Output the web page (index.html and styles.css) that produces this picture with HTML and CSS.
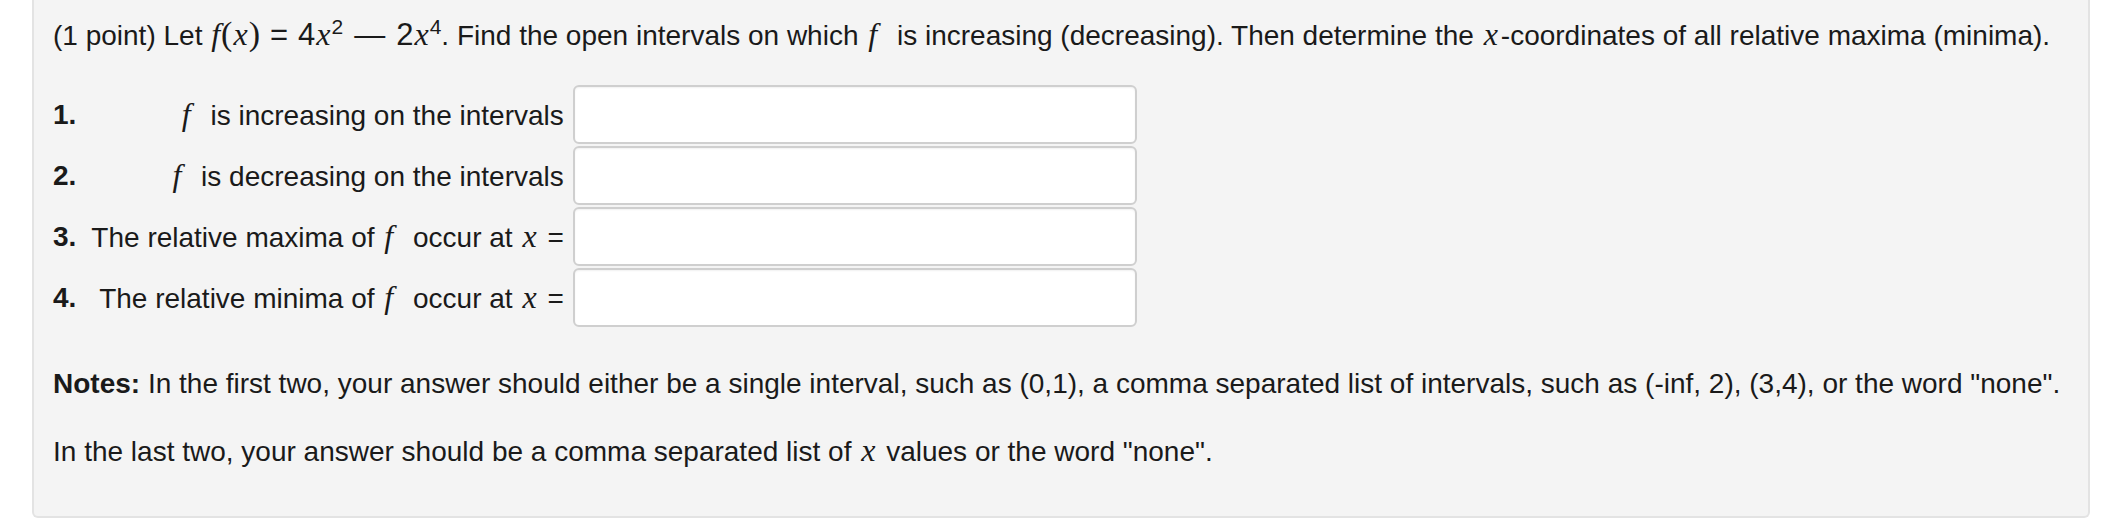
FILE: index.html
```html
<!DOCTYPE html>
<html lang="en">
<head>
  <meta charset="UTF-8" />
  <title>Problem</title>
  <link rel="stylesheet" href="styles.css">
</head>
<body>
  <div class="problem">
    <p class="intro">(1 point) Let <span class="m"><i>f</i><span class="paren">(</span><i>x</i><span class="paren">)</span><span class="op">=</span>4<i>x</i><sup>2</sup><span class="op minus">&#8212;</span>2<i>x</i><sup>4</sup></span>. Find the open intervals on which <i class="f">f</i> is increasing (decreasing). Then determine the <i>x</i>-coordinates of all relative maxima (minima).</p>

    <div class="answers">
      <b class="num">1.</b>
      <label class="lbl" for="ans1"><i class="f">f</i> is increasing on the intervals</label>
      <input type="text" id="ans1" />

      <b class="num">2.</b>
      <label class="lbl" for="ans2"><i class="f">f</i> is decreasing on the intervals</label>
      <input type="text" id="ans2" />

      <b class="num">3.</b>
      <label class="lbl" for="ans3">The relative maxima of <i class="f">f</i> occur at <i>x</i> =</label>
      <input type="text" id="ans3" />

      <b class="num">4.</b>
      <label class="lbl" for="ans4">The relative minima of <i class="f">f</i> occur at <i>x</i> =</label>
      <input type="text" id="ans4" />
    </div>

    <p class="note"><b>Notes:</b> In the first two, your answer should either be a single interval, such as (0,1), a comma separated list of intervals, such as (-inf, 2), (3,4), or the word "none".</p>
    <p class="note">In the last two, your answer should be a comma separated list of <i>x</i> values or the word "none".</p>
  </div>
</body>
</html>
```
FILE: styles.css
```css
body {
  margin: 0;
  padding: 0;
  font-family: "Liberation Sans", Arial, sans-serif;
  font-size: 28px;
  color: #1a1a1a;
  background: #fff;
}
.problem {
  margin-left: 32px;
  width: 2058px;
  height: 518px;
  box-sizing: border-box;
  background: #f4f4f4;
  border: 2px solid #e3e3e3;
  border-top: none;
  border-radius: 0 0 6px 6px;
  padding: 0 19px;
}
.intro {
  margin: 0;
  padding-top: 17px;
  line-height: 34px;
}
i {
  font-family: "Liberation Serif", "DejaVu Serif", serif;
  font-size: 32px;
  padding: 0 3px 0 2px;
}
i.f {
  padding-right: 12px;
}
.paren {
  font-family: "Liberation Serif", serif;
  font-size: 34px;
}
sup {
  font-size: 21px;
  line-height: 0;
}
.m {
  font-size: 31px;
}
.m i {
  padding: 0 1px;
}
.op {
  padding: 0 10px;
}
.minus {
  padding: 0 11px;
}
.answers {
  display: grid;
  grid-template-columns: auto auto 564px;
  justify-content: start;
  row-gap: 2px;
  margin-top: 32px;
  align-items: center;
}
.num {
  font-weight: bold;
  padding-right: 15px;
}
.lbl {
  text-align: right;
  padding-right: 9px;
}
input[type="text"] {
  height: 59px;
  box-sizing: border-box;
  border: 2px solid #cfcfcf;
  border-radius: 6px;
  background: #fff;
  box-shadow: inset 0 1px 2px rgba(0, 0, 0, 0.06);
  font-size: 24px;
  padding: 4px 10px;
}
.note {
  margin: 0;
  line-height: 34px;
  margin-top: 40px;
}
.note + .note {
  margin-top: 32px;
}
```
